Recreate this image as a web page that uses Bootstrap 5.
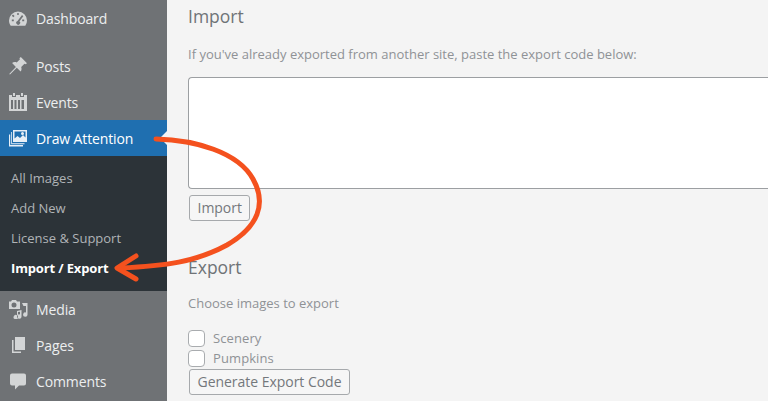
<!DOCTYPE html><html lang="en">
<head>
    <meta name="viewport" content="width=device-width, initial-scale=1.0">
    <meta charset="UTF-8">
    <title>Import / Export</title>
    <link rel="stylesheet" href="https://cdn.jsdelivr.net/npm/bootstrap@5.3.0/dist/css/bootstrap.min.css">
    <style>
        html, body { height: 401px; overflow: hidden; }
        body { background: #f4f4f4; font-family: "Open Sans", "Liberation Sans", sans-serif; position: relative; }
        .wp-shell { height: 401px; }
        .wp-side { width: 167px; flex: none; background: #6f7275; color: #eceeef; font-size: 14px; letter-spacing: -.12px; }
        .wp-item { height: 36px; padding-left: 8px; gap: 8px; }
        .wp-item svg { width: 20px; height: 20px; fill: #d3d5d6; flex: none; }
        .wp-item.is-current { background: #1f6fb0; color: #fff; position: relative; }
        .wp-item.is-current svg { fill: #e8f0f7; }
        .wp-item.is-current::after { content: ""; position: absolute; right: 0; top: 11px; border: 7px solid transparent; border-right-color: #f4f4f4; border-left: 0; }
        .wp-first { height: 37px; }
        .wp-gap { height: 11px; }
        .wp-sub { background: #2c3338; height: 135px; padding-top: 8px; font-size: 13px; letter-spacing: 0; color: #b0b4b7; }
        .wp-sub div { height: 30px; padding-left: 11px; display: flex; align-items: center; }
        .wp-sub .is-on { color: #fff; font-weight: 700; letter-spacing: -.15px; }
        .wp-main { padding-left: 21px; color: #8f9296; font-size: 13px; min-width: 0; flex: 1; }
        .wp-title { font-size: 17.5px; font-weight: 400; color: #6f7377; margin: 0; line-height: 24px; }
        .wp-text { margin: 0; line-height: 18px; }
        .wp-area { height: 112px; margin: 14px -4px 0 0; background: #fff; border: 1px solid #9c9fa2; border-radius: 4px 0 0 4px; border-right: 0; }
        .wp-btn { display: block; margin-left: 1px; background: #f6f6f6; color: #74787c; border: 1px solid #a6a9ac; border-radius: 3px; font-size: 14px; line-height: 18px; padding: 3px 7.5px; letter-spacing: -.03px; }
        .wp-check { gap: 8px; height: 20.5px; letter-spacing: .1px; }
        .wp-box { width: 17px; height: 17px; background: #fff; border: 1px solid #a9acaf; border-radius: 4px; flex: none; }
        .wp-arrow { position: absolute; left: 0; top: 0; pointer-events: none; }
        .wp-head-import { margin-top: 4px; }
        .wp-head-export { margin-top: 34px; }
        .wp-note-import { margin-top: 17px; }
        .wp-note-export { margin-top: 15px; }
        .wp-btn-import { margin-top: 6px; }
        .wp-checks { margin-top: 16px; }
    </style>
</head>
<body>
    <div class="wp-shell d-flex">
        <div class="wp-side">
            <div class="wp-item wp-first d-flex align-items-center">
                <svg viewBox="0 0 20 20"><path d="M10 2.500a9 9 0 0 0-9 9c0 2 .6 3.800 1.700 5.300h14.600A9 9 0 0 0 19 11.500a9 9 0 0 0-9-9zM5 5.500l1.600 1.500-1.300 1.300-1.500-1.500zM10 4a1 1 0 1 1 0 2 1 1 0 0 1 0-2zM3.800 10.500h2v1.700h-2zm10.400 0h2v1.700h-2zM14 6l1.300 1.200-3.800 5a2 2 0 1 1-2-.3z"/></svg>
                <span>Dashboard</span>
            </div>
            <div class="wp-gap"></div>
            <div class="wp-item d-flex align-items-center">
                <svg viewBox="0 0 20 20"><path d="M12.800 1l6.200 6.200-1.500 1.100-1-.6-3.300 3.300c.7 1.800.3 3.400-.6 4.600L8.800 11.800 2 18.500l-.8-.6 6.700-7L4.100 7.100c1.200-1 2.900-1.300 4.600-.6l3.300-3.300-.6-1z"/></svg>
                <span>Posts</span>
            </div>
            <div class="wp-item d-flex align-items-center">
                <svg viewBox="0 0 20 20"><path fill-rule="evenodd" d="M5 1h2v3H5zm8 0h2v3h-2zM1 3h3v2h4V3h4v2h4V3h3v16H1zm2 5v9h2V8zm3.500 0v9h2V8zm3.500 0v9h2V8zm3.500 0v9H16V8z"/></svg>
                <span>Events</span>
            </div>
            <div class="wp-item is-current d-flex align-items-center">
                <svg viewBox="0 0 20 20"><path fill-rule="evenodd" d="M5 2h14v12H5zm1.500 1.500v7l3-2.500 2.500 2 3-3 2.500 2.500V3.500zM14.500 4a1.500 1.500 0 1 1 0 3 1.500 1.500 0 0 1 0-3zM3.200 4H4v11.300h12.500v.9H3.200zM1 6.500h1.200V17H15v1.500H1z"/></svg>
                <span>Draw Attention</span>
            </div>
            <div class="wp-sub">
                <div>All Images</div>
                <div>Add New</div>
                <div>License &amp; Support</div>
                <div class="is-on">Import / Export</div>
            </div>
            <div class="wp-item d-flex align-items-center">
                <svg viewBox="0 0 20 20"><path fill-rule="evenodd" d="M4 1h4l1 1.500h3V10H1V2.500h2zm2 2.500a2.500 2.500 0 1 0 0 5 2.500 2.500 0 0 0 0-5zM14 4h5.500v11.500a2.200 2.200 0 1 1-1.500-2V7h-2.500zM9 12l4.500-1v6.500a2.200 2.200 0 1 1-1.500-2v-2.800l-2 .4V18a2.200 2.200 0 1 1-1-1.800z"/></svg>
                <span>Media</span>
            </div>
            <div class="wp-item d-flex align-items-center">
                <svg viewBox="0 0 20 20"><path d="M7 2h10v13H7zM5.500 5v11.500H13V18H4V5z"/></svg>
                <span>Pages</span>
            </div>
            <div class="wp-item d-flex align-items-center">
                <svg viewBox="0 0 20 20"><path d="M4 2.500h12a2 2 0 0 1 2 2v8a2 2 0 0 1-2 2h-5l-4 4v-4H4a2 2 0 0 1-2-2v-8a2 2 0 0 1 2-2z"/></svg>
                <span>Comments</span>
            </div>
        </div>
        <div class="wp-main">
            <h2 class="wp-title wp-head-import">Import</h2>
            <p class="wp-text wp-note-import">If you've already exported from another site, paste the export code below:</p>
            <div class="wp-area"></div>
            <button type="button" class="wp-btn wp-btn-import">Import</button>
            <h2 class="wp-title wp-head-export">Export</h2>
            <p class="wp-text wp-note-export">Choose images to export</p>
            <div class="wp-checks">
                <div class="wp-check d-flex align-items-center"><span class="wp-box"></span><span>Scenery</span></div>
                <div class="wp-check d-flex align-items-center"><span class="wp-box"></span><span>Pumpkins</span></div>
            </div>
            <button type="button" class="wp-btn">Generate Export Code</button>
        </div>
    </div>
    <svg class="wp-arrow" width="768" height="401" viewBox="0 0 768 401" fill="none" stroke="#f4511e" stroke-linecap="round" stroke-linejoin="round">
        <path d="M156 139C195 140 238 152 253 179C267 204 258 227 227 245C196 262 165 266 120 268" stroke-width="5"/>
        <path d="M136 256L117 268L136 279" stroke-width="5"/>
    </svg>
</body>
</html>
